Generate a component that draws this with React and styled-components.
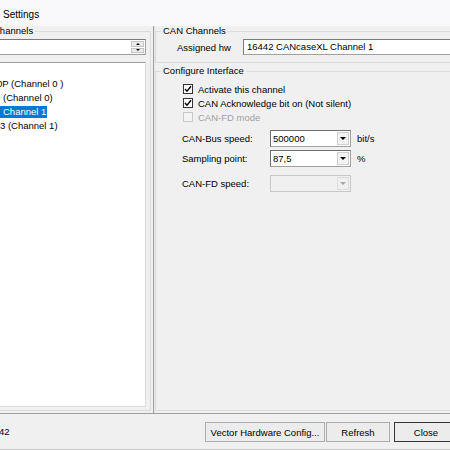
import React from "react";
import styled, { createGlobalStyle } from "styled-components";

const GlobalStyle = createGlobalStyle`
  html, body {
    margin: 0;
    padding: 0;
    background: #f0f0f0;
  }
  body {
    font-family: "Liberation Sans", Arial, sans-serif;
    font-size: 9.5px;
    color: #000;
  }
`;

const Window = styled.div`
  width: 450px;
  height: 450px;
  overflow: hidden;
  display: flex;
  flex-direction: column;
  background: #f0f0f0;
`;

const TitleBar = styled.div`
  flex: none;
  height: 26px;
  box-sizing: border-box;
  padding: 2px 0 0 3px;
  display: flex;
  align-items: center;
  background: #f9f9fb;
  font-size: 10px;
`;

const Body = styled.div`
  flex: 1;
  min-height: 0;
  display: flex;
  overflow: hidden;
`;

const LeftPane = styled.div`
  flex: 0 0 153px;
  display: flex;
  flex-direction: column;
  overflow: hidden;
`;

const Splitter = styled.div`
  flex: 0 0 2px;
  box-sizing: border-box;
  border-left: 1px solid #a0a0a0;
  border-right: 1px solid #e6e6e6;
`;

const RightPane = styled.div`
  flex: 0 0 320px;
  display: flex;
  flex-direction: column;
  padding-bottom: 2px;
`;

const Group = styled.fieldset`
  margin: ${(p) => p.$margin || "0"};
  min-width: 0;
  box-sizing: border-box;
  border: 1px solid #dcdcdc;
  padding: ${(p) => p.$pad};
  display: flex;
  flex-direction: column;
  flex: ${(p) => (p.$grow ? "1" : "none")};
`;

const Legend = styled.legend`
  padding: 0 2px;
  line-height: 10px;
  font-size: 9.5px;
`;

/* left channel list */

const SpinBox = styled.div`
  margin-top: 3px;
  height: 16px;
  box-sizing: border-box;
  background: #fff;
  border: 1px solid #a0a0a0;
  border-top-color: #7a7a7a;
  display: flex;
  justify-content: flex-end;
  padding: 1px;
`;

const SpinButtons = styled.div`
  width: 13px;
  display: flex;
  flex-direction: column;
  gap: 1px;
`;

const SpinHalf = styled.div`
  flex: 1;
  background: #ececec;
  border: 1px solid #c4c4c4;
  display: flex;
  align-items: center;
  justify-content: center;
  &::after {
    content: "";
    border-left: 2px solid transparent;
    border-right: 2px solid transparent;
    ${(p) => (p.$up ? "border-bottom: 2px solid #000;" : "border-top: 2px solid #000;")}
  }
`;

const ListBox = styled.div`
  margin-top: 7px;
  flex: 1;
  background: #fff;
  border: 1px solid #dcdcdc;
  border-top-color: #a0a0a0;
  border-left-color: #a0a0a0;
  overflow: hidden;
`;

const ListItem = styled.div`
  height: 14px;
  line-height: 14px;
  white-space: nowrap;
  padding-left: ${(p) => p.$indent || 0}px;
`;

const Selected = styled.span`
  display: inline-block;
  height: 12px;
  line-height: 12px;
  margin-top: 1px;
  padding: 0 1px 0 ${(p) => p.$pad}px;
  background: #0078d7;
  color: #fff;
  vertical-align: top;
`;

/* right side */

const FieldRow = styled.div`
  display: flex;
  align-items: center;
  margin-top: ${(p) => p.$top || 0}px;
  padding-left: ${(p) => p.$left || 0}px;
  white-space: nowrap;
`;

const FieldLabel = styled.span`
  flex: none;
  width: ${(p) => p.$width}px;
`;

const TextBox = styled.div`
  flex: 1;
  height: 16px;
  box-sizing: border-box;
  background: #fff;
  border: 1px solid #a0a0a0;
  border-top-color: #7a7a7a;
  border-left-color: #7a7a7a;
  padding-left: 3px;
  line-height: 14px;
`;

const CheckRow = styled.div`
  height: 14px;
  display: flex;
  align-items: center;
  gap: 5px;
  padding-left: 22px;
  color: ${(p) => (p.$disabled ? "#a0a0a0" : "#000")};
  &:first-of-type {
    margin-top: 6px;
  }
`;

const CheckBox = styled.span`
  flex: none;
  width: 10px;
  height: 10px;
  box-sizing: border-box;
  border: 1px solid ${(p) => (p.$disabled ? "#c8c8c8" : "#333")};
  background: ${(p) => (p.$disabled ? "#f4f4f4" : "#fff")};
  display: flex;
  align-items: center;
  justify-content: center;
`;

const Combo = styled.div`
  flex: none;
  width: 81px;
  height: 17px;
  box-sizing: border-box;
  display: flex;
  align-items: stretch;
  padding: 1px;
  background: ${(p) => (p.$disabled ? "#f0f0f0" : "#fff")};
  border: 1px solid ${(p) => (p.$disabled ? "#c8c8c8" : "#a0a0a0")};
  border-top-color: ${(p) => (p.$disabled ? "#c8c8c8" : "#707070")};
  border-left-color: ${(p) => (p.$disabled ? "#c8c8c8" : "#707070")};
`;

const ComboValue = styled.span`
  flex: 1;
  padding-left: 1px;
  line-height: 13px;
`;

const ComboButton = styled.span`
  flex: none;
  width: 12px;
  box-sizing: border-box;
  background: ${(p) => (p.$disabled ? "#f0f0f0" : "#f2f2f2")};
  border: 1px solid ${(p) => (p.$disabled ? "#dcdcdc" : "#cfcfcf")};
  display: flex;
  align-items: center;
  justify-content: center;
  &::after {
    content: "";
    border-left: 3px solid transparent;
    border-right: 3px solid transparent;
    border-top: 3px solid ${(p) => (p.$disabled ? "#a8a8a8" : "#000")};
  }
`;

const Unit = styled.span`
  margin-left: 6px;
`;

/* bottom bar */

const BottomBar = styled.div`
  flex: none;
  height: 37px;
  box-sizing: border-box;
  border-top: 1px solid #a0a0a0;
  border-bottom: 1px solid #c8c8c8;
  padding-top: 8px;
  display: flex;
  align-items: flex-start;
`;

const Status = styled.span`
  flex: 1;
  min-width: 0;
  line-height: 20px;
  margin-left: -1px;
`;

const Buttons = styled.div`
  flex: none;
  display: flex;
  margin-right: -8px;
`;

const Button = styled.button`
  height: 20px;
  width: ${(p) => p.$width}px;
  margin-left: ${(p) => p.$gap || 0}px;
  padding: 0;
  font-family: inherit;
  font-size: 9.5px;
  color: #000;
  background: #ececec;
  border: 1px solid ${(p) => (p.$default ? "#333" : "#acacac")};
`;

function Check({ checked, disabled, children }) {
  return (
    <CheckRow $disabled={disabled}>
      <CheckBox $disabled={disabled}>
        {checked && (
          <svg width="8" height="8" viewBox="0 0 8 8">
            <path d="M1 4 L3 6.2 L7 1.2" fill="none" stroke="#000" strokeWidth="1.4" />
          </svg>
        )}
      </CheckBox>
      {children}
    </CheckRow>
  );
}

function ComboBox({ value, disabled }) {
  return (
    <Combo $disabled={disabled}>
      <ComboValue>{value}</ComboValue>
      <ComboButton $disabled={disabled} />
    </Combo>
  );
}

export default function App() {
  return (
    <>
      <GlobalStyle />
      <Window>
        <TitleBar>Settings</TitleBar>
        <Body>
          <LeftPane>
            <Group $grow $margin="0 2px 2px -15px" $pad="0 4px 3px 5px">
              <Legend>Channels</Legend>
              <SpinBox>
                <SpinButtons>
                  <SpinHalf $up />
                  <SpinHalf />
                </SpinButtons>
              </SpinBox>
              <ListBox>
                <ListItem />
                <ListItem $indent={5}>0P (Channel 0 )</ListItem>
                <ListItem $indent={11}>(Channel 0)</ListItem>
                <ListItem>
                  <Selected $pad={11}>Channel 1</Selected>
                </ListItem>
                <ListItem $indent={8}>3 (Channel 1)</ListItem>
              </ListBox>
            </Group>
          </LeftPane>
          <Splitter />
          <RightPane>
            <Group $pad="0 0 7px 5px">
              <Legend>CAN Channels</Legend>
              <FieldRow $top={3} $left={16}>
                <FieldLabel $width={66}>Assigned hw</FieldLabel>
                <TextBox>16442 CANcaseXL Channel 1</TextBox>
              </FieldRow>
            </Group>
            <Group $grow $margin="3px 0 0 0" $pad="0 0 0 5px">
              <Legend>Configure Interface</Legend>
              <Check checked>Activate this channel</Check>
              <Check checked>CAN Acknowledge bit on (Not silent)</Check>
              <Check disabled>CAN-FD mode</Check>
              <FieldRow $top={6} $left={21}>
                <FieldLabel $width={88}>CAN-Bus speed:</FieldLabel>
                <ComboBox value="500000" />
                <Unit>bit/s</Unit>
              </FieldRow>
              <FieldRow $top={3} $left={21}>
                <FieldLabel $width={88}>Sampling point:</FieldLabel>
                <ComboBox value="87,5" />
                <Unit>%</Unit>
              </FieldRow>
              <FieldRow $top={8} $left={21}>
                <FieldLabel $width={88}>CAN-FD speed:</FieldLabel>
                <ComboBox value="" disabled />
              </FieldRow>
            </Group>
          </RightPane>
        </Body>
        <BottomBar>
          <Status>42</Status>
          <Buttons>
            <Button $width={120}>Vector Hardware Config...</Button>
            <Button $width={64} $gap={1}>Refresh</Button>
            <Button $width={64} $gap={4} $default>Close</Button>
          </Buttons>
        </BottomBar>
      </Window>
    </>
  );
}
